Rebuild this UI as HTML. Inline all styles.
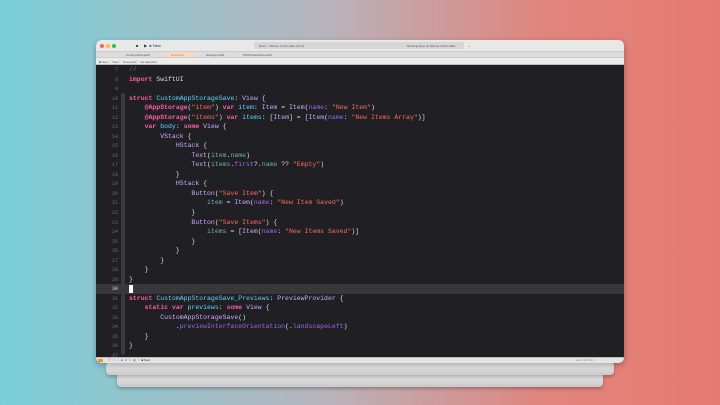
<!DOCTYPE html>
<html><head><style>
*{margin:0;padding:0;box-sizing:border-box}
body{width:720px;height:405px;overflow:hidden;background:linear-gradient(90deg,#79cfd8 0%,#b8b4bc 45%,#e0857e 75%,#e77a70 100%);position:relative;font-family:"Liberation Sans",sans-serif}
.card{position:absolute;border-radius:4px;background:linear-gradient(#f0f0f0,#c8c8c8);box-shadow:0 2px 3px rgba(0,0,0,.25)}
.win{position:absolute;left:96px;top:40px;width:528px;height:323px;border-radius:5px;overflow:hidden;background:#1f1f24;box-shadow:0 2px 6px rgba(0,0,0,.3)}
.tb{position:absolute;left:0;top:0;width:100%;height:11px;background:#e8e8e8}
.tabs{position:absolute;left:0;top:11px;width:100%;height:6px;background:#dcdcdc;border-top:1px solid #ccc}
.bc{position:absolute;left:0;top:17px;width:100%;height:8px;background:#ececec;border-top:1px solid #ccc;border-bottom:1px solid #bbb}
.sb{position:absolute;left:0;bottom:0;width:100%;height:6px;background:#e4e4e4;border-top:1px solid #bbb}
.t{position:absolute;font-size:3px;color:#555;white-space:nowrap}
.dot{position:absolute;top:4px;width:4px;height:4px;border-radius:50%}
.code{position:absolute;left:0;top:25px;width:100%;font-family:"Liberation Mono",monospace;font-size:6.5px;color:#dfdfe0}
.l{height:9.54px;line-height:9.54px;position:relative;white-space:pre}
.n{display:inline-block;width:22px;text-align:right;color:#6c6c70;font-size:5px;margin-right:11px}
.cur{background:#37373c}
.k{color:#fc5fa3;font-weight:bold}.s{color:#fc6a5d}.ty{color:#d0a8ff}.d{color:#5dd8ff}.p{color:#67b7a4}.m{color:#a167e6}
.rib{position:absolute;left:25px;top:53px;width:4px;height:262px;background:#3a3a3f;border-radius:2px}
</style></head><body>
<div class="card" style="left:117px;top:372px;width:486px;height:15px"></div>
<div class="card" style="left:106px;top:362px;width:508px;height:13px"></div>
<div class="win">
 <div class="tb">
  <div class="dot" style="left:4px;background:#fe5f57"></div><div class="dot" style="left:10px;background:#febc2e"></div><div class="dot" style="left:16px;background:#28c840"></div>
  <div class="t" style="left:40px;top:3px;font-size:4px;color:#333">■ &nbsp;&nbsp;&nbsp; ▶ &nbsp;<span style="color:#2a6ee8">■</span> New</div>
  <div style="position:absolute;left:158px;top:2px;width:210px;height:7px;background:#d6d6d6;border-radius:2px"></div>
  <div class="t" style="left:163px;top:4px">New 〉 iPhone 14 Pro Max (16.4)</div>
  <div class="t" style="left:311px;top:4px">Running New on iPhone 14 Pro Max</div>
  <div class="t" style="left:372px;top:4px;color:#d9a400">▲</div>
 </div>
 <div class="tabs">
  <div style="position:absolute;left:68px;top:0;width:32px;height:5px;background:#f6d8c6"></div>
  <div class="t" style="left:30px;top:1px">ContentView.swift</div>
  <div class="t" style="left:75px;top:1px;color:#e57a3a">New.swift</div>
  <div class="t" style="left:110px;top:1px">NewApp.swift</div>
  <div class="t" style="left:147px;top:1px">PWPreviewView.swift</div>
 </div>
 <div class="bc"><div class="t" style="left:3px;top:2px">■ New 〉 New 〉 New.swift 〉 No Selection</div></div>
 <div class="rib"></div>
 <div class="code"><div class="l"><span class="n">7</span><span style="color:#6c7986">//</span></div><div class="l"><span class="n">8</span><span class="k">import</span> SwiftUI</div><div class="l"><span class="n">9</span></div><div class="l"><span class="n">10</span><span class="k">struct</span> <span class="d">CustomAppStorageSave</span>: <span class="ty">View</span> {</div><div class="l"><span class="n">11</span>    <span class="k">@AppStorage</span>(<span class="s">"item"</span>) <span class="k">var</span> <span class="d">item</span>: <span class="ty">Item</span> = <span class="ty">Item</span>(<span class="m">name</span>: <span class="s">"New Item"</span>)</div><div class="l"><span class="n">12</span>    <span class="k">@AppStorage</span>(<span class="s">"items"</span>) <span class="k">var</span> <span class="d">items</span>: [<span class="ty">Item</span>] = [<span class="ty">Item</span>(<span class="m">name</span>: <span class="s">"New Items Array"</span>)]</div><div class="l"><span class="n">13</span>    <span class="k">var</span> <span class="d">body</span>: <span class="k">some</span> <span class="ty">View</span> {</div><div class="l"><span class="n">14</span>        <span class="ty">VStack</span> {</div><div class="l"><span class="n">15</span>            <span class="ty">HStack</span> {</div><div class="l"><span class="n">16</span>                <span class="ty">Text</span>(<span class="p">item</span>.<span class="p">name</span>)</div><div class="l"><span class="n">17</span>                <span class="ty">Text</span>(<span class="p">items</span>.<span class="m">first</span>?.<span class="p">name</span> ?? <span class="s">"Empty"</span>)</div><div class="l"><span class="n">18</span>            }</div><div class="l"><span class="n">19</span>            <span class="ty">HStack</span> {</div><div class="l"><span class="n">20</span>                <span class="ty">Button</span>(<span class="s">"Save Item"</span>) {</div><div class="l"><span class="n">21</span>                    <span class="p">item</span> = <span class="ty">Item</span>(<span class="m">name</span>: <span class="s">"New Item Saved"</span>)</div><div class="l"><span class="n">22</span>                }</div><div class="l"><span class="n">23</span>                <span class="ty">Button</span>(<span class="s">"Save Items"</span>) {</div><div class="l"><span class="n">24</span>                    <span class="p">items</span> = [<span class="ty">Item</span>(<span class="m">name</span>: <span class="s">"New Items Saved"</span>)]</div><div class="l"><span class="n">25</span>                }</div><div class="l"><span class="n">26</span>            }</div><div class="l"><span class="n">27</span>        }</div><div class="l"><span class="n">28</span>    }</div><div class="l"><span class="n">29</span>}</div><div class="l cur"><span class="n" style="color:#ddd">30</span><span style="display:inline-block;width:4px;height:8px;background:#fff;vertical-align:middle"></span></div><div class="l"><span class="n">31</span><span class="k">struct</span> <span class="d">CustomAppStorageSave_Previews</span>: <span class="ty">PreviewProvider</span> {</div><div class="l"><span class="n">32</span>    <span class="k">static</span> <span class="k">var</span> <span class="d">previews</span>: <span class="k">some</span> <span class="ty">View</span> {</div><div class="l"><span class="n">33</span>        <span class="ty">CustomAppStorageSave</span>()</div><div class="l"><span class="n">34</span>            .<span class="m">previewInterfaceOrientation</span>(.<span class="m">landscapeLeft</span>)</div><div class="l"><span class="n">35</span>    }</div><div class="l"><span class="n">36</span>}</div><div class="l"><span class="n">37</span></div></div>
 <div class="sb">
  <div style="position:absolute;left:2px;top:1px;width:5px;height:3px;background:#f7931e"></div>
  <div class="t" style="left:12px;top:0;color:#888">☰ &nbsp;◇ &nbsp;⚠ &nbsp;◆ &nbsp;⊕ &nbsp;▷ &nbsp;▦ &nbsp;↗ &nbsp;<span style="color:#333">■ New</span></div>
  <div class="t" style="left:480px;top:0;color:#888">Line: 30 Col: 1</div>
 </div>
</div>
</body></html>
